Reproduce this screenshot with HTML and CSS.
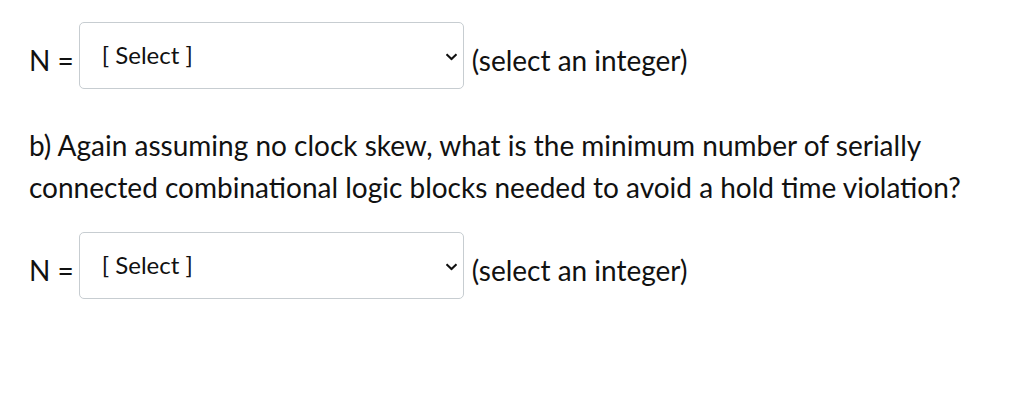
FILE: index.html
```html
<!DOCTYPE html>
<html lang="en">
<head>
    <meta charset="UTF-8">
    <title>Quiz Question</title>
    <link rel="stylesheet" href="styles.css">
</head>
<body>
    <div class="question">
        <div class="answer-row">
            <span class="answer-label">N =</span>
            <div class="select-wrap">
                <select class="answer-select">
                    <option>[ Select ]</option>
                    <option>1</option>
                    <option>2</option>
                    <option>3</option>
                </select>
                <svg class="chevron" width="13" height="8" viewBox="0 0 13 8">
                    <path d="M1.5 1.5 L6.5 6.3 L11.5 1.5" fill="none" stroke="#111" stroke-width="2.1"/>
                </svg>
            </div>
            <span class="answer-hint">(select an integer)</span>
        </div>

        <p class="prompt">b) Again assuming no clock skew, what is the minimum number of serially connected combinational logic blocks needed to avoid a hold time violation?</p>

        <div class="answer-row">
            <span class="answer-label">N =</span>
            <div class="select-wrap">
                <select class="answer-select">
                    <option>[ Select ]</option>
                    <option>1</option>
                    <option>2</option>
                    <option>3</option>
                </select>
                <svg class="chevron" width="13" height="8" viewBox="0 0 13 8">
                    <path d="M1.5 1.5 L6.5 6.3 L11.5 1.5" fill="none" stroke="#111" stroke-width="2.1"/>
                </svg>
            </div>
            <span class="answer-hint">(select an integer)</span>
        </div>
    </div>
</body>
</html>
```

FILE: styles.css
```css
body {
    margin: 0;
    padding: 22px 20px 0 29px;
    font-family: Lato, "Open Sans", sans-serif;
    font-size: 28px;
    line-height: 42px;
    color: #111;
    background: #fff;
}
.answer-row {
    display: flex;
    align-items: flex-start;
}
.answer-label {
    margin-top: 17px;
    margin-right: 5px;
}
.answer-hint {
    margin-top: 17px;
    margin-left: 8px;
}
.select-wrap {
    position: relative;
}
.answer-select {
    display: block;
    -webkit-appearance: none;
    appearance: none;
    width: 385px;
    height: 67px;
    padding: 0 40px 2px 22px;
    font-family: Lato, "Open Sans", sans-serif;
    font-size: 24px;
    color: #111;
    background: #fff;
    border: 1px solid #c7cdd1;
    border-radius: 5px;
}
.chevron {
    position: absolute;
    right: 6px;
    top: 50%;
    transform: translateY(-40%);
    pointer-events: none;
}
.prompt {
    margin: 35px 0 24px 0;
}
```
